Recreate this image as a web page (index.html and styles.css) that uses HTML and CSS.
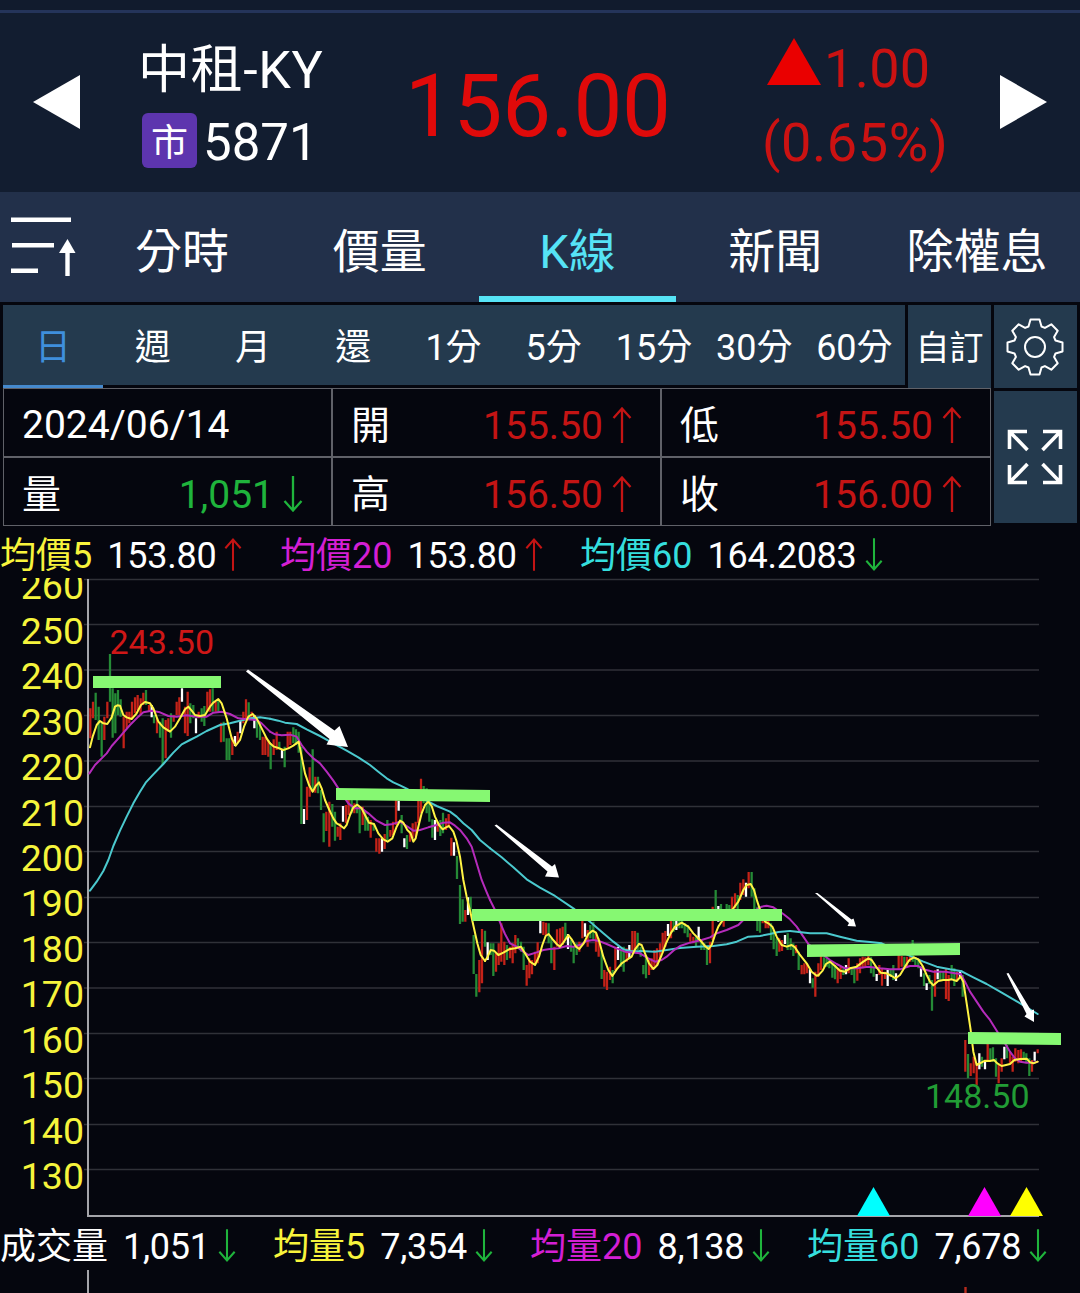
FILE: index.html
```html
<!DOCTYPE html>
<html lang="zh-Hant">
<head>
<meta charset="utf-8">
<title>中租-KY 5871</title>
<link rel="stylesheet" href="styles.css">
</head>
<body>
<svg class="defs" width="0" height="0">
  <symbol id="up" viewBox="0 0 20 36"><path d="M10 36V1.5M1.5 11L10 1.5L18.5 11" fill="none" stroke="currentColor" stroke-width="2.3"/></symbol>
  <symbol id="down" viewBox="0 0 20 36"><path d="M10 0V34.5M1.5 25L10 34.5L18.5 25" fill="none" stroke="currentColor" stroke-width="2.3"/></symbol>
</svg>
<div class="app">
  <header class="quote">
    <svg class="prev" width="47" height="54" viewBox="0 0 47 54"><path d="M0 27L47 0V54Z"/></svg>
    <div class="stock">
      <div class="name">中租-KY</div>
      <div class="code"><span class="badge">市</span>5871</div>
    </div>
    <div class="price">156.00</div>
    <div class="change">
      <div class="diff"><svg width="54" height="47" viewBox="0 0 54 47"><path d="M27 0L54 47H0Z"/></svg>1.00</div>
      <div class="pct">(0.65%)</div>
    </div>
    <svg class="next" width="47" height="54" viewBox="0 0 47 54"><path d="M47 27L0 0V54Z"/></svg>
  </header>

  <nav class="tabs">
    <svg class="sort" width="83" height="110" viewBox="0 192 83 110">
      <path d="M11 219.7H71M12 245.3H54M11 270.7H38" stroke="#fff" stroke-width="4.6"/>
      <path d="M67.500 276V250" stroke="#fff" stroke-width="4.4"/><path d="M67.500 239L75.500 253H59Z" fill="#fff"/>
    </svg>
    <div class="tab">分時</div><div class="tab">價量</div><div class="tab active">K線</div><div class="tab">新聞</div><div class="tab last">除權息</div>
  </nav>

  <section class="controls">
    <div class="main">
      <div class="ranges">
        <div class="periods">
          <div class="period active">日</div><div class="period">週</div><div class="period">月</div><div class="period">還</div><div class="period">1分</div><div class="period">5分</div><div class="period">15分</div><div class="period">30分</div><div class="period">60分</div>
        </div>
        <div class="custom">自訂</div>
      </div>
      <div class="table">
        <div class="cell"><span class="date">2024/06/14</span></div>
        <div class="cell"><span>開</span><span class="val red">155.50<svg class="arr"><use href="#up"/></svg></span></div>
        <div class="cell"><span>低</span><span class="val red">155.50<svg class="arr"><use href="#up"/></svg></span></div>
        <div class="cell"><span>量</span><span class="val green">1,051<svg class="arr"><use href="#down"/></svg></span></div>
        <div class="cell"><span>高</span><span class="val red">156.50<svg class="arr"><use href="#up"/></svg></span></div>
        <div class="cell"><span>收</span><span class="val red">156.00<svg class="arr"><use href="#up"/></svg></span></div>
      </div>
    </div>
    <div class="side">
      <div class="tool gear">
        <svg width="60" height="60" viewBox="-30 -30 60 60" fill="none" stroke="#fff" stroke-width="2" stroke-linejoin="round">
          <path d="M-4.500 -27.500H4.500L6.500 -20.500L9.900 -19.100L16.300 -22.700L22.700 -16.300L19.100 -9.900L20.500 -6.500L27.500 -4.500V4.500L20.500 6.500L19.100 9.900L22.700 16.300L16.300 22.700L9.900 19.100L6.500 20.500L4.500 27.500H-4.500L-6.500 20.500L-9.900 19.100L-16.300 22.700L-22.700 16.300L-19.100 9.900L-20.500 6.500L-27.500 4.500V-4.500L-20.500 -6.500L-19.100 -9.900L-22.700 -16.300L-16.300 -22.700L-9.900 -19.100L-6.500 -20.500Z"/>
          <circle r="10"/>
        </svg>
      </div>
      <div class="tool expand">
        <svg width="56" height="56" viewBox="0 0 56 56" fill="none" stroke="#fff" stroke-width="3.600">
          <path d="M20 2.500H2.500V20M2.500 2.500L20.500 21M36 2.500H53.500V20M53.500 2.500L35.500 21M2.500 36V53.500H20M2.500 53.500L20.500 35M53.500 36V53.500H36M53.500 53.500L35.500 35"/>
        </svg>
      </div>
    </div>
  </section>

  <div class="legend prices">
    <div class="item"><span class="yellow">均價5</span><span>153.80</span><svg class="arr red"><use href="#up"/></svg></div>
    <div class="item"><span class="magenta">均價20</span><span>153.80</span><svg class="arr red"><use href="#up"/></svg></div>
    <div class="item"><span class="cyan">均價60</span><span>164.2083</span><svg class="arr green"><use href="#down"/></svg></div>
  </div>

  <svg class="chart" width="1080" height="639" viewBox="0 578 1080 639">
    <path class="grid" d="M84 579.500H1039M84 624.500H1039M84 670H1039M84 715.500H1039M84 761H1039M84 806.500H1039M84 851.500H1039M84 897.500H1039M84 942.500H1039M84 988H1039M84 1033.500H1039M84 1078.500H1039M84 1124.500H1039M84 1169.500H1039"/>
    <g class="scale">
      <text x="84" y="598.500">260</text><text x="84" y="643.500">250</text><text x="84" y="689">240</text><text x="84" y="734.500">230</text><text x="84" y="780">220</text><text x="84" y="825.500">210</text><text x="84" y="871">200</text><text x="84" y="916">190</text><text x="84" y="961.500">180</text><text x="84" y="1007">170</text><text x="84" y="1052.500">160</text><text x="84" y="1098">150</text><text x="84" y="1143.500">140</text><text x="84" y="1189">130</text>
    </g>
    <path d="M88 579V1216H1039" fill="none" stroke="#a5a5aa" stroke-width="2"/>

    <g class="candles">
      <g transform="translate(80 640) scale(.33333)">
        <path class="r" d="M31 205V295M39 185V235M73 230V300M82 185V235M131 230V325M140 215V265M148 215V250M156 185V235M165 172V220M173 165V210M182 175V225M190 158V195M207 195V215M231 235V280M257 240V355M265 235V275M281 225V245M290 185V225M298 172V225M315 200V280M323 155V288M356 215V235M382 155V215M390 148V215M407 185V215M423 248V307M457 290V345M473 275V310M490 215V250M498 178V235M515 215V235M548 290V345M556 290V345M565 300V350"/>
        <path class="g" d="M47 158V240M56 200V300M65 245V350M90 42V185M98 145V293M106 160V280M114 150V225M122 178V230M198 150V195M222 225V250M240 245V293M248 235V375M273 220V293M331 190V250M340 195V235M365 205V245M373 198V258M398 145V215M415 178V215M431 245V305M440 295V360M448 295V360M506 187V235M531 240V293M540 248V300"/>
        <path class="w" d="M215 195V232M306 145V185M348 235V280M465 288V318M481 240V280M523 225V265"/>
      </g>
      <g transform="translate(270 680) scale(.33333)">
        <path class="r" d="M11 178V225M20 155V210M53 155V205M61 155V195M111 320V420M119 262V350M136 290V338M169 395V453M178 365V500M203 440V470M211 430V480M228 375V430M236 360V405M253 370V400M278 380V435M302 420V473M319 475V515M328 475V521M344 462V507M361 450V470M369 425V465M378 360V435M420 455V485M428 430V475M437 425V470M445 360V430M453 296V400M503 425V455M528 415V450M536 402V440M544 473V527M586 690V725M628 840V937M636 747V910"/>
        <path class="g" d="M2 190V268M28 185V208M44 200V262M70 142V190M78 148V195M86 155V218M94 200V432M128 208V335M144 290V340M153 330V390M161 400V487M187 372V440M195 395V482M245 350V400M261 355V400M269 380V460M286 395V452M294 410V452M311 430V452M352 420V480M395 405V460M411 465V507M461 318V370M470 325V400M478 365V425M487 418V473M511 420V468M519 398V460M561 528V597M570 615V732M578 658V725M602 650V700M611 765V882M619 882V950M645 752V800"/>
        <path class="w" d="M36 208V235M102 387V432M219 378V425M336 475V515M386 362V392M403 475V502M495 420V480M552 487V527M594 652V705M653 787V840"/>
      </g>
      <g transform="translate(440 780) scale(.33333)">
        <path class="r" d="M168 520V575M176 490V555M184 430V545M193 485V555M210 500V535M218 490V550M226 465V520M260 555V617M268 535V595M276 540V583M285 515V555M293 487V550M310 425V465M318 428V468M343 500V570M351 448V500M360 445V500M368 440V495M418 485V515M427 423V475M443 450V500M468 460V515M476 475V530M493 570V620M501 575V630M510 560V600M526 500V570M560 505V545M577 453V520M585 453V515"/>
        <path class="g" d="M152 490V525M160 490V588M201 495V540M234 475V505M243 485V515M251 500V570M326 430V490M334 475V550M376 428V480M393 480V515M401 500V550M410 490V525M451 435V475M460 425V480M485 510V597M518 570V610M543 510V560M551 500V575M593 458V510"/>
        <path class="w" d="M301 423V460M384 462V507M435 430V470M534 500V540M568 495V535"/>
      </g>
      <g transform="translate(630 850) scale(.33333)">
        <path class="r" d="M57 330V375M65 325V360M73 300V350M81 295V345M90 280V325M98 248V310M106 243V290M123 213V265M181 250V275M190 260V280M240 275V340M248 170V270M281 200V230M306 140V180M315 130V175M331 98V150M340 88V135M356 66V115M398 205V220M407 205V235M415 210V235M448 265V305M456 270V303M498 285V310M515 345V373M523 340V373M531 340V370M556 365V440M565 340V380M573 315V360"/>
        <path class="g" d="M32 290V320M40 345V373M48 315V385M131 210V245M148 210V235M156 205V235M164 220V250M173 225V262M198 262V290M214 270V300M223 280V300M231 290V345M257 120V190M273 162V180M290 162V180M298 165V180M323 135V180M365 66V140M373 115V195M382 170V243M390 190V248M423 220V270M431 240V298M440 265V318M473 250V300M482 265V300M490 280V318M506 305V360M548 385V413"/>
        <path class="w" d="M114 222V258M139 212V240M206 230V270M265 168V215M348 98V140M465 255V282M540 358V400"/>
      </g>
      <g transform="translate(790 880) scale(.33333)">
        <path class="r" d="M143 265V310M152 260V297M176 235V280M202 250V302M210 235V280M218 230V265M226 232V260M235 225V255M268 255V285M276 265V317M285 275V297M326 225V270M335 228V260M351 230V260M360 230V245M435 270V350M468 265V357M476 285V363M501 275V300"/>
        <path class="g" d="M102 232V262M110 235V260M118 240V265M127 250V293M135 255V298M160 265V285M185 262V285M193 265V310M243 232V280M251 262V290M302 270V290M310 255V300M343 230V265M368 180V245M376 235V260M385 240V265M402 280V318M418 285V312M426 300V392M451 272V300M460 275V300M485 255V300M493 265V318M518 285V350"/>
        <path class="w" d="M168 255V283M260 282V303M293 270V318M318 280V303M393 260V290M410 310V330M443 268V298M510 272V295"/>
      </g>
      <g transform="translate(920 940) scale(.33333)">
        <path class="r" d="M136 300V395M152 370V408M161 350V400M170 370V435M203 312V365M236 375V430M245 355V395M270 335V370M278 350V395M286 325V365M295 330V370M303 328V365M336 360V395M353 328V340"/>
        <path class="g" d="M144 342V415M186 350V380M211 325V360M219 322V365M228 355V410M261 315V355M311 335V360M319 340V370M328 355V408"/>
        <path class="w" d="M178 340V388M195 365V388M253 320V358M344 335V362"/>
      </g>
    </g>

    <g class="averages">
      <g transform="translate(80 640) scale(.33333)">
        <polyline class="c" points="30,752 50,725 70,693 85,660 100,618 120,572 140,530 160,490 180,455 197,428 220,403 250,372 280,338 305,313 330,300 350,290 380,273 420,255 450,250 480,242 510,235 540,232 570,236"/>
        <polyline class="m" points="28,400 45,375 65,355 80,340 95,318 120,290 150,255 175,230 190,217 215,212 240,217 265,228 290,230 320,226 350,230 380,230 400,218 425,215 450,222 475,235 500,238 530,240 545,250 560,265 570,275"/>
        <polyline class="y" points="30,322 38,290 50,255 60,243 70,250 82,252 95,232 105,200 112,196 120,197 130,225 140,232 155,237 170,220 183,195 195,186 210,190 220,205 235,245 250,262 270,275 285,260 300,235 315,208 325,200 335,212 345,225 360,228 375,225 390,200 400,188 415,177 425,190 440,235 455,295 467,317 480,300 492,260 505,230 518,222 530,235 545,265 560,295 570,310"/>
      </g>
      <g transform="translate(270 680) scale(.33333)">
        <polyline class="c" points="0,116 25,122 45,128 80,132 110,148 150,168 190,190 230,212 265,232 300,255 325,275 350,295 370,307 390,316 410,326 475,365 500,378 540,395 560,410 580,430 605,450 630,480 660,505"/>
        <polyline class="m" points="0,155 15,163 35,166 60,164 80,170 95,195 110,215 130,235 150,250 170,275 190,302 205,325 235,370 255,385 275,385 295,400 320,422 345,435 365,433 390,425 410,438 430,452 450,450 475,442 500,435 520,428 540,427 555,437 570,450 590,475 605,500 620,550 635,600 648,632 660,660"/>
        <polyline class="y" points="0,190 12,200 25,204 40,210 55,205 70,197 86,185 95,230 105,280 117,315 128,335 137,318 147,307 155,325 165,360 178,390 190,415 200,430 212,437 222,445 230,435 240,405 250,382 262,374 275,385 285,405 297,428 312,432 325,460 340,478 353,485 367,475 380,440 390,422 400,428 412,450 422,460 430,485 437,475 445,440 455,400 465,375 475,365 485,378 495,410 507,435 518,448 528,442 537,438 550,455 560,485 570,530 580,600 590,650 602,700 612,745 622,790 632,825 645,843"/>
      </g>
      <g transform="translate(440 780) scale(.33333)">
        <polyline class="c" points="150,205 185,232 220,262 260,298 300,323 345,348 400,385 450,425 490,460 520,485 550,508 570,513 600,514"/>
        <polyline class="m" points="150,360 165,390 182,432 195,462 210,490 230,500 250,515 265,525 290,517 310,510 330,507 355,505 380,498 400,500 420,495 440,483 460,480 480,484 500,492 530,505 555,515 600,520"/>
        <polyline class="y" points="135,543 143,530 152,510 162,512 175,525 190,518 207,508 225,505 243,500 255,520 270,545 285,555 297,530 307,495 317,468 326,462 338,478 350,492 360,500 370,488 385,465 395,478 408,500 418,507 430,492 445,462 458,452 468,458 478,485 490,530 505,570 517,588 530,568 545,550 560,540 575,530 585,508 597,492"/>
      </g>
      <g transform="translate(630 850) scale(.33333)">
        <polyline class="c" points="30,303 75,305 110,300 150,294 200,290 250,288 290,283 320,275 355,260 390,258 420,252 445,246 480,243"/>
        <polyline class="m" points="30,310 55,325 75,335 95,330 110,320 130,302 150,288 180,278 215,270 240,262 260,250 290,240 325,225 360,190 395,170 410,167 430,172 460,192 480,208 500,230 520,260 535,282 580,315"/>
        <polyline class="y" points="27,282 35,285 45,310 57,340 70,357 82,345 95,315 108,280 122,250 135,230 155,218 175,230 190,250 210,270 225,288 236,297 245,285 255,255 265,230 285,200 310,175 325,155 340,120 350,105 362,102 372,120 382,155 392,185 405,215 415,220 427,230 440,260 455,285 470,290 485,285 495,292 510,315 530,340 545,365 560,377 565,376"/>
      </g>
      <g transform="translate(790 880) scale(.33333)">
        <polyline class="c" points="0,153 60,160 110,160 150,170 200,182 240,186 275,190 370,232 400,245 440,260 480,268 515,274"/>
        <polyline class="m" points="100,225 120,240 140,252 165,265 200,265 235,260 270,265 300,268 330,268 360,258 385,258 400,268 430,275 465,275 495,280 512,282"/>
        <polyline class="y" points="85,286 98,272 108,252 120,245 135,258 150,272 165,275 180,265 200,260 220,245 235,235 245,240 258,260 272,278 290,280 305,288 317,295 330,285 345,260 358,240 372,232 385,238 398,258 410,285 420,305 430,316 445,303 460,300 475,300 485,298 500,303 512,290"/>
      </g>
      <g transform="translate(920 940) scale(.33333)">
        <polyline class="c" points="125,94 160,112 200,132 240,155 280,178 320,202 353,222"/>
        <polyline class="m" points="122,102 135,125 150,155 170,185 190,215 210,240 232,275 258,315 270,335 285,355 300,365 320,368 340,368 353,365"/>
        <polyline class="y" points="122,110 130,125 140,190 152,270 160,335 170,375 180,370 195,362 210,363 222,360 232,370 245,378 258,375 270,372 283,360 300,357 320,356 330,367 340,370 353,365"/>
      </g>
    </g>

    <path class="level" d="M93 676H221V688H93ZM336 788L490 790V802L336 800ZM472 909H782V921H472ZM807 944.500L960 943V955L807 957ZM968 1032L1061 1033V1045L968 1044Z"/>
    <g class="pointer">
      <path d="M246 671.500L248 669.500L334.500 730.500L339.500 726L348 747L326.500 744.500L329.500 739Z"/>
      <path d="M494.500 825.500L496.500 824.500L552 866.500L555 864L559 877.500L545 876.500L547.500 871.500Z"/>
      <path d="M815 893L817.500 893L851.500 919.500L853.500 918.500L856 926.500L847.500 926L849 923Z"/>
      <path d="M1006.500 973.500L1008.500 973L1031 1010.500L1034 1009.500L1034 1022L1024.500 1016.500L1026.500 1014Z"/>
    </g>
    <text class="mark" x="109.500" y="654" fill="#cf1717">243.50</text>
    <text class="mark" x="925" y="1108" fill="#219c35">148.50</text>
    <path d="M873.500 1187L890 1216H857Z" fill="#0ff"/><path d="M984.500 1187L1001 1216H968Z" fill="#f0f"/><path d="M1026.500 1187L1043 1216H1010Z" fill="#ff0"/>
  </svg>

  <div class="legend volumes">
    <div class="item"><span>成交量</span><span>1,051</span><svg class="arr green"><use href="#down"/></svg></div>
    <div class="item"><span class="yellow">均量5</span><span>7,354</span><svg class="arr green"><use href="#down"/></svg></div>
    <div class="item"><span class="magenta">均量20</span><span>8,138</span><svg class="arr green"><use href="#down"/></svg></div>
    <div class="item"><span class="cyan">均量60</span><span>7,678</span><svg class="arr green"><use href="#down"/></svg></div>
  </div>
  <svg class="volume-chart" width="1080" height="23" viewBox="0 1270 1080 23">
    <path d="M88 1270V1293" stroke="#a5a5aa" stroke-width="2"/><path d="M965.500 1287V1293" stroke="#b92a1c" stroke-width="2.400"/>
  </svg>
</div>
</body>
</html>
```
FILE: styles.css
```css
* { box-sizing: border-box; }
body { margin: 0; background: #05060e; color: #fff; font-family: Roboto, "Noto Sans CJK TC", sans-serif; }
svg { display: block; flex: none; }
.defs { position: absolute; }
.app { width: 1080px; height: 1293px; overflow: hidden; display: flex; flex-direction: column; }
.app > * { flex: none; }
.red { color: #c41414; }
.green { color: #1fb43c; }
.yellow { color: #f8f43c; }
.magenta { color: #d41fd4; }
.cyan { color: #35dede; }

.quote { height: 192px; border-top: 10px solid #111b2d; padding-top: 23px; background: linear-gradient(#24345a 3px, #121d30 3px); display: grid; grid-template-columns: 139px 270px 353px 238px 80px; line-height: 74px; }
.quote > svg { fill: #fff; margin-top: 42px; }
.prev { margin-left: 33px; }
.name { font-size: 52px; letter-spacing: 0.6px; margin-left: -1px; padding-top: 1px; height: 74px; }
.code { font-size: 51px; display: flex; align-items: center; height: 72px; white-space: nowrap; }
.badge { width: 55px; height: 55px; margin: -6px 6px 0 3px; border-radius: 6px; background: #5d35ae; font-size: 37px; line-height: 61px; text-align: center; }
.price { font-size: 87px; line-height: 147px; letter-spacing: -0.3px; color: #e00a0a; margin-left: -4px; }
.change { font-size: 54px; color: #cb1212; white-space: nowrap; }
.diff { display: flex; padding-left: 5px; height: 73px; line-height: 72px; letter-spacing: 0.3px; }
.diff svg { fill: #ea0000; margin: 5px 3px 0 0; }
.pct { letter-spacing: 0.6px; }

.tabs { height: 110px; display: flex; background: #22304a; font-size: 47px; }
.tab { width: 198px; padding-top: 9px; line-height: 102px; text-align: center; white-space: nowrap; }
.tab.last { width: 206px; }
.tab.active { color: #56e3f6; border-bottom: 6px solid #56e3f6; height: 110px; }

.controls { display: flex; gap: 3px; padding: 3px 3px 0; height: 224px; }
.main { width: 988px; }
.ranges { display: flex; gap: 3px; height: 83px; }
.periods { display: grid; grid-template-columns: repeat(9, 1fr); width: 902px; height: 80px; background: #243a4e; font-size: 36px; text-align: center; padding-top: 3px; }
.period { height: 80px; line-height: 81px; margin-left: -1px; }
.period.active { color: #3f8fdc; border-bottom: 3px solid #4589cd; margin-left: 0; }
.custom { width: 83px; background: #243a4e; font-size: 34px; line-height: 86px; text-align: center; }
.table { display: grid; grid-template-columns: 329px 329px 330px; grid-template-rows: 69px 69px; border: 1px solid #606168; width: 988px; height: 138px; overflow: hidden; }
.cell { display: flex; justify-content: space-between; padding: 4px 28px 0 18px; font-size: 39px; line-height: 66px; border-right: 2px solid #606168; border-bottom: 2px solid #606168; }
.cell:nth-child(3n) { border-right: 0; padding-right: 30px; }
.cell:nth-child(n + 4) { border-bottom: 0; }
.date { margin-top: -1px; }
.val { display: flex; gap: 9px; }
.arr { width: 20px; height: 36px; }
.val .arr { margin-top: 14px; }
.side { width: 83px; display: grid; grid-template-rows: 83px 132px; gap: 3px; }
.tool { background: #243a4e; display: grid; place-items: center; padding-right: 1px; }
.expand { padding-right: 2px; padding-bottom: 1px; }

.legend { display: flex; font-size: 36px; line-height: 46px; white-space: nowrap; }
.legend span + span { letter-spacing: -0.25px; }
.prices { height: 52px; padding-top: 7px; }
.volumes { height: 53px; padding-top: 7px; }
.item { display: flex; gap: 15px; }
.legend .arr { width: 18px; height: 33px; margin: 5px 0 0 -7px; }
.prices .item:nth-child(1) { width: 280px; }
.prices .item:nth-child(2) { width: 300px; }
.volumes .item:nth-child(1) { width: 273px; }
.volumes .item:nth-child(2) { width: 257px; }
.volumes .item:nth-child(3) { width: 277px; }

.chart, .volume-chart { font-family: Roboto, sans-serif; }
.grid { stroke: #303138; stroke-width: 1.4; }
.scale { fill: #f6f43c; font-size: 37.5px; text-anchor: end; }
.mark { font-size: 34px; }
.candles path { stroke-width: 6.8; fill: none; }
.r { stroke: #c42218; }
.g { stroke: #258a36; }
.w { stroke: #fff; }
.averages polyline { fill: none; stroke-width: 6; stroke-linejoin: round; stroke-linecap: round; }
.y { stroke: #fff344; }
.m { stroke: #b52bbb; }
.c { stroke: #4bc9ce; }
.level { fill: #86f872; }
.pointer { fill: #fff; }
```
